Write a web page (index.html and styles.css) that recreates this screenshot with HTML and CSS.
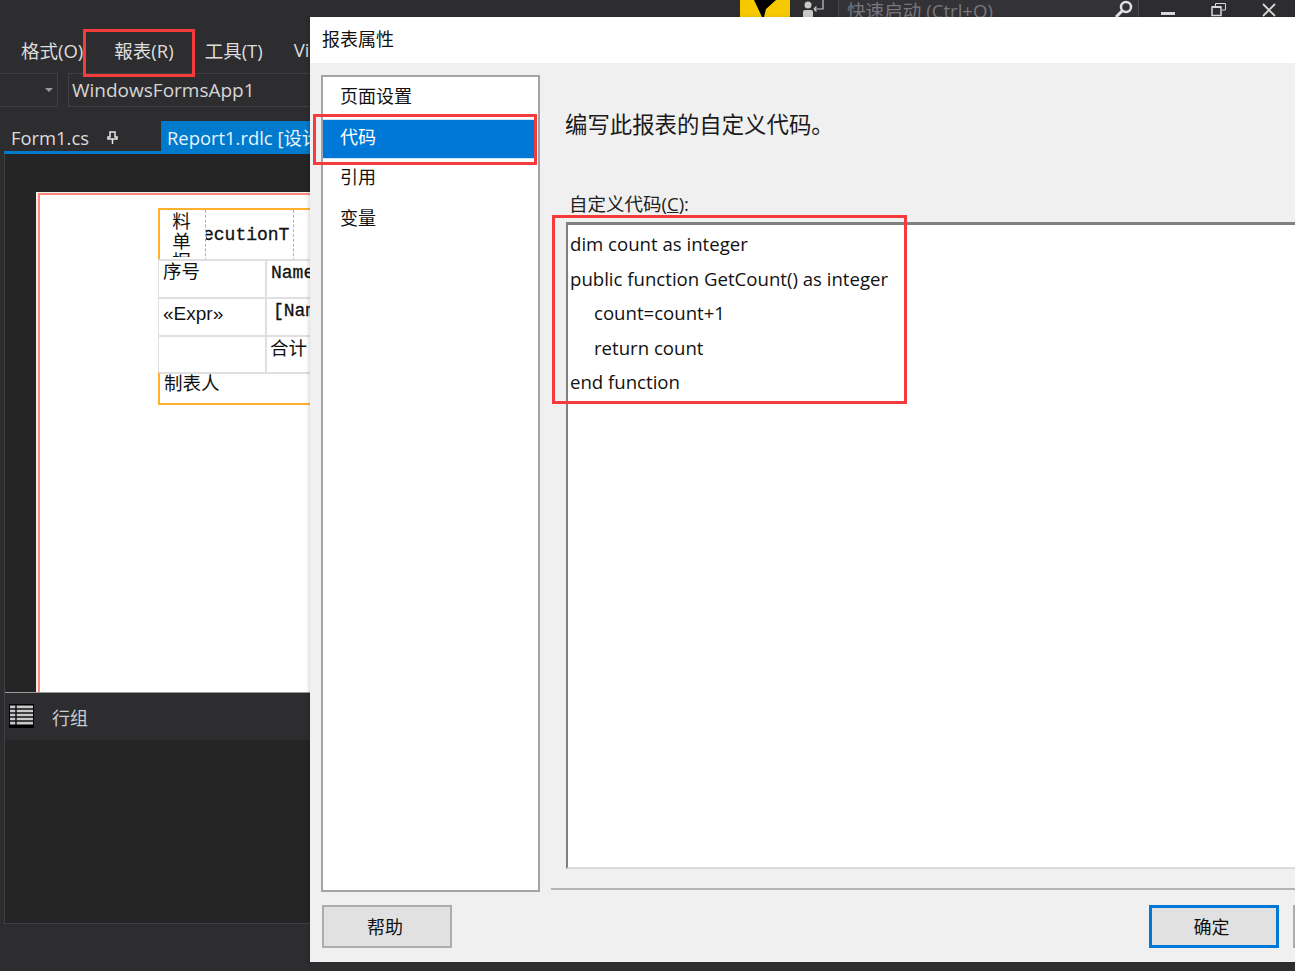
FILE: index.html
```html
<!DOCTYPE html>
<html lang="zh-CN">
<head>
<meta charset="utf-8">
<title>报表属性</title>
<link rel="stylesheet" href="styles.css">
</head>
<body>
<div class="stage">
  <div class="ide">
    <header class="titlebar">
      <div class="logo"><svg width="50" height="17" viewBox="0 0 50 17"><rect width="50" height="17" fill="#f5c800"/><path d="M14 0H36L26 9L24 17H22Z" fill="#000"/></svg></div>
      <svg class="user" width="22" height="17" viewBox="0 0 22 17"><circle cx="6" cy="5" r="3.500" fill="#c8c8c8"/><path d="M1 17V12Q1 10 3 10H9Q11 10 11 12V17Z" fill="#c8c8c8"/><path d="M12 9H21V0M12 9L14.500 6.500M12 9L14.500 11.500" fill="none" stroke="#c8c8c8" stroke-width="1.200"/></svg>
      <div class="quick">
        <span class="quick-text">快速启动 (Ctrl+Q)</span>
        <svg class="search" width="20" height="17" viewBox="0 0 20 17"><circle cx="12" cy="7" r="5" fill="none" stroke="#e0e0e0" stroke-width="2.500"/><path d="M8 11L2 17" stroke="#e0e0e0" stroke-width="3"/></svg>
      </div>
      <svg class="win-min" width="14" height="17" viewBox="0 0 14 17"><rect y="12" width="14" height="3" fill="#d8d8d8"/></svg>
      <svg class="win-restore" width="16" height="17" viewBox="0 0 16 17"><path d="M4.500 6V3.500H14.500V10H11" fill="none" stroke="#d8d8d8"/><rect x="1" y="7" width="9" height="8.500" fill="none" stroke="#d8d8d8" stroke-width="1.500"/><rect x="1" y="6" width="9" height="2" fill="#d8d8d8"/></svg>
      <svg class="win-close" width="16" height="17" viewBox="0 0 16 17"><path d="M2 4L14 16M14 4L2 16" stroke="#d8d8d8" stroke-width="1.800"/></svg>
    </header>
    <nav class="menubar">
      <span class="menu-item m1">格式(O)</span>
      <span class="menu-item m2">報表(R)</span>
      <span class="menu-item m3">工具(T)</span>
      <span class="menu-item m4">View</span>
    </nav>
    <div class="toolbar">
      <div class="combo combo-a"><span class="arrow"></span></div>
      <div class="combo combo-b">WindowsFormsApp1</div>
    </div>
    <div class="tabs">
      <div class="tab">Form1.cs
        <svg class="pin" width="11" height="13" viewBox="0 0 11 13"><path d="M3 1H8V6H10V8H1V6H3Z M5.500 8V13" fill="none" stroke="#e8e8e8" stroke-width="1.500"/></svg>
      </div>
      <div class="tab tab-active">Report1.rdlc [设计]</div>
    </div>
    <main class="well">
      <div class="canvas">
        <div class="page">
          <div class="report">
            <div class="r-head">
              <div class="r-title">料单据</div>
              <div class="r-exec"><span class="mono">ecutionT</span></div>
            </div>
            <div class="r-row r-h38"><div class="cell c1">序号</div><div class="cell mono-cell">Name</div></div>
            <div class="r-row r-h38"><div class="cell c1 expr">«Expr»</div><div class="cell mono-cell ind">[Name]</div></div>
            <div class="r-row r-h37"><div class="cell c1"></div><div class="cell ind-cjk">合计</div></div>
            <div class="r-foot">制表人</div>
          </div>
        </div>
      </div>
      <div class="groups">
        <svg class="g-icon" width="25" height="24" viewBox="0 0 25 24"><rect width="25" height="24" fill="#000"/><rect x="1" y="1.500" width="23" height="19" fill="#c8c8c8"/><path d="M1 5H24M1 9H24M1 13H24M1 17H24M7 1V21" stroke="#111" stroke-width="1.500"/></svg>
        <span class="g-label">行组</span>
      </div>
      <div class="lower"></div>
    </main>
  </div>

  <section class="dialog">
    <div class="d-title">报表属性</div>
    <div class="d-body">
      <div class="d-main">
        <ul class="nav-list">
          <li class="nav-item">页面设置</li>
          <li class="nav-item nav-selected">代码</li>
          <li class="nav-item">引用</li>
          <li class="nav-item">变量</li>
        </ul>
        <div class="pane">
          <h1 class="pane-title">编写此报表的自定义代码。</h1>
          <div class="field-label">自定义代码(<u>C</u>):</div>
          <div class="code">
            <div class="code-line">dim count as integer</div>
            <div class="code-line">public function GetCount() as integer</div>
            <div class="code-line code-ind">count=count+1</div>
            <div class="code-line code-ind">return count</div>
            <div class="code-line">end function</div>
          </div>
          <div class="rule"></div>
        </div>
      </div>
      <div class="d-foot">
        <button class="btn">帮助</button>
        <button class="btn btn-primary">确定</button>
        <button class="btn btn-cut"></button>
      </div>
    </div>
  </section>

  <div class="mark mark-menu"></div>
  <div class="mark mark-nav"></div>
  <div class="mark mark-code"></div>
</div>
</body>
</html>
```
FILE: styles.css
```css
* { box-sizing: border-box; }
html, body { margin: 0; padding: 0; }
body { background: #2d2d30; font-family: "Open Sans", "Noto Sans CJK SC", sans-serif; }
.stage { position: relative; width: 1295px; height: 971px; overflow: hidden; background: #2d2d30; }

/* IDE */
.ide { display: flex; flex-direction: column; height: 100%; color: #dcdcdc; }
.titlebar { display: flex; height: 17px; padding-left: 740px; overflow: hidden; background: #2d2d30; flex: none; }
.titlebar svg, .logo { flex: none; display: block; }
.logo { width: 50px; height: 17px; }
.user { margin-left: 12px; }
.quick { display: flex; width: 301px; height: 17px; margin-left: 14px; border-left: 1px solid #47474c; border-right: 1px solid #47474c; padding-left: 8px; background: #333337; overflow: hidden; }
.quick-text { display: block; width: 268px; flex: none; font-size: 18.600px; line-height: 20px; color: #77777d; margin-top: 1px; white-space: nowrap; }
.search { margin-left: -1px; }
.win-min { margin-left: 22px; }
.win-restore { margin-left: 36px; }
.win-close { margin-left: 34px; }

.menubar { display: flex; height: 56px; align-items: center; flex: none; padding-top: 9px; }
.menu-item { font-size: 18.500px; color: #dedede; white-space: nowrap; }
.m1 { margin-left: 21px; }
.m2 { margin-left: 31px; }
.m3 { margin-left: 31px; }
.m4 { margin-left: 31px; }

.toolbar { display: flex; height: 34px; gap: 10px; flex: none; }
.combo { height: 34px; border: 1px solid #3f3f46; background: #2d2d30; display: flex; align-items: center; font-size: 19px; color: #d6d6d6; white-space: nowrap; }
.combo-a { width: 58px; border-left: 0; justify-content: flex-end; padding-right: 4px; }
.combo-b { width: 260px; padding-left: 3px; }
.arrow { width: 0; height: 0; border-left: 4px solid transparent; border-right: 4px solid transparent; border-top: 4px solid #9a9a9a; }

.tabs { display: flex; height: 33px; margin-top: 14px; padding: 0 0 0 3px; flex: none; border-bottom: 3px solid #007acc; margin-left: 4px; }
.tab { width: 150px; padding: 3px 0 0 4px; font-size: 18.400px; line-height: 27px; color: #dcdcdc; white-space: nowrap; display: flex; align-items: center; }
.pin { margin-left: 18px; }
.tab-active { width: 200px; margin-left: 4px; padding-left: 6px; background: #007acc; color: #e8f3fb; overflow: hidden; }

.well { flex: none; height: 770px; margin-left: 4px; border: 1px solid #3f3f46; border-top: 0; background: #252526; display: flex; flex-direction: column; width: 320px; }
.canvas { height: 538px; padding: 38px 0 0 31px; background: #252526; flex: none; }
.page { height: 500px; background: #fff; border-left: 2px solid #eeeeee; border-top: 1px solid #eeeeee; box-shadow: inset 2px 2px 0 #ff8a78; padding: 15px 0 0 120px; overflow: hidden; }
.report { width: 240px; color: #111; font-size: 18.500px; font-family: "Noto Sans CJK SC", sans-serif; }
.r-head { display: flex; height: 51px; border: 2px solid #ffb02e; border-bottom: 0; overflow: hidden; }
.r-title { width: 45px; flex: none; padding: 0 11px 0 9px; font-size: 18.500px; line-height: 20px; height: 47px; overflow: hidden; text-align: center; }
.r-exec { width: 89px; overflow: hidden; border-left: 1px dashed #b0b0b0; border-right: 1px dashed #b0b0b0; padding-top: 9px; height: 51px; text-indent: -3px; }
.mono { font-family: "Liberation Mono", monospace; font-size: 18px; line-height: 22px; white-space: nowrap; color: #111; -webkit-text-stroke: 0.300px #111; }
.r-row { display: flex; border-top: 2px solid #e0e0e0; border-left: 1px solid #e0e0e0; }
.r-h38 { height: 38px; }
.r-h37 { height: 37px; }
.cell { line-height: 18px; padding: 0 0 0 4px; white-space: nowrap; overflow: hidden; }
.c1 { width: 108px; border-right: 2px solid #e0e0e0; flex: none; }
.mono-cell { font-family: "Liberation Mono", monospace; font-size: 18px; line-height: 24px; -webkit-text-stroke: 0.300px #111; }
.ind { padding-left: 6px; }
.ind-cjk { padding-left: 3px; line-height: 20px; }
.expr { font-family: "Liberation Sans", sans-serif; font-size: 19px; line-height: 29px; }
.r-foot { height: 33px; border: 2px solid #ffb02e; border-top: 2px solid #e0e0e0; border-right: 0; padding-left: 4px; line-height: 16px; }

.groups { height: 48px; background: #2d2d30; display: flex; padding: 11px 0 0 4px; flex: none; border-top: 1px solid #999; }
.g-icon { flex: none; }
.g-label { font-size: 18px; line-height: 28px; color: #c8ccd0; margin-left: 18px; }
.lower { flex: 1; background: #252526; }

/* Dialog window */
.dialog { position: absolute; left: 310px; top: 17px; width: 985px; height: 945px; background: #f0f0f0; display: flex; flex-direction: column; box-shadow: -2px 0 3px rgba(0,0,0,.12); color: #111; font-family: "Open Sans", "Noto Sans CJK SC", sans-serif; }
.d-title { height: 46px; flex: none; background: #fff; padding-left: 12px; font-size: 18px; line-height: 45px; }
.d-body { flex: 1; display: flex; flex-direction: column; min-height: 0; }
.d-main { flex: 1; display: flex; min-height: 0; padding: 12px 0 0 11px; }
.nav-list { list-style: none; margin: 0; padding: 1px 4px 1px 0; width: 219px; height: 817px; background: #fff; border: 2px solid #a0a4a8; flex: none; }
.nav-item { height: 40.500px; padding-left: 17px; font-size: 18px; line-height: 37px; }
.nav-selected { background: #0078d7; color: #fff; border: 1px solid #cfe4f7; border-width: 1px 0; line-height: 35px; }
.pane { flex: 1; min-width: 0; display: flex; flex-direction: column; padding-left: 11px; }
.pane-title { margin: 32px 0 0 14px; font-size: 22.400px; font-weight: 400; line-height: 36px; color: #1a1a1a; white-space: nowrap; }
.field-label { margin: 48px 0 0 18px; font-size: 18.500px; line-height: 26px; white-space: nowrap; color: #222; }
.code { margin: 5px 0 0 15px; height: 647px; background: #fff; border: 2px solid #808080; border-right: 0; border-top-width: 3px; border-bottom-color: #dcdcdc; padding: 2px 0 0 2px; }
.code-line { font-size: 18.600px; line-height: 34.500px; white-space: nowrap; color: #111; }
.code-ind { padding-left: 24px; }
.rule { margin-top: 19px; height: 2px; background: #b4b4b4; flex: none; }
.d-foot { height: 57px; flex: none; display: flex; padding: 0 0 14px 12px; }
.btn { height: 43px; width: 130px; background: #e1e1e1; border: 2px solid #adadad; font: 18px "Noto Sans CJK SC", sans-serif; color: #111; padding: 0 4px 2px 0; flex: none; }
.btn-primary { margin-left: 697px; border: 3px solid #0078d7; width: 130px; padding-right: 5px; }
.btn-cut { margin-left: 14px; }

/* Red annotation rectangles */
.mark { position: absolute; border: 3px solid #f53b3b; pointer-events: none; }
.mark-menu { left: 83px; top: 29px; width: 112px; height: 48px; }
.mark-nav { left: 313px; top: 114px; width: 224px; height: 51px; }
.mark-code { left: 552px; top: 215px; width: 355px; height: 189px; }
```
